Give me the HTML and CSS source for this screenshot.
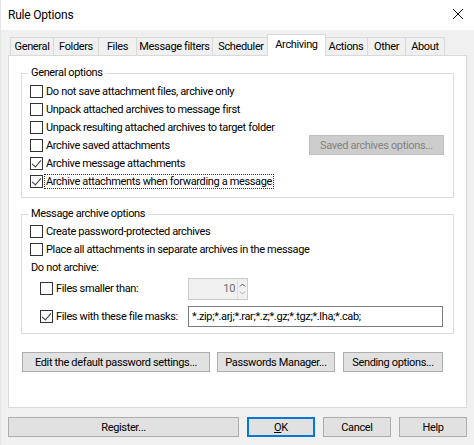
FILE: index.html
```html
<!DOCTYPE html>
<html lang="en">
<head>
  <meta charset="UTF-8">
  <title>Rule Options</title>
  <link rel="stylesheet" href="styles.css">
</head>
<body>
  <div class="window">
    <div class="titlebar">
      <span class="title">Rule Options</span>
      <svg class="close" width="12" height="12" viewBox="0 0 12 12">
        <path d="M1 1 L11 11 M11 1 L1 11" stroke="#111" stroke-width="1" fill="none"/>
      </svg>
    </div>

    <div class="content">
      <div class="tabs">
        <div class="tab tab-general">General</div>
        <div class="tab tab-folders">Folders</div>
        <div class="tab tab-files">Files</div>
        <div class="tab tab-filters">Message filters</div>
        <div class="tab tab-scheduler">Scheduler</div>
        <div class="tab tab-archiving active">Archiving</div>
        <div class="tab tab-actions">Actions</div>
        <div class="tab tab-other">Other</div>
        <div class="tab tab-about">About</div>
      </div>

      <div class="panel">
        <fieldset class="group group-general">
          <legend>General options</legend>
          <div class="row"><span class="check"></span>Do not save attachment files, archive only</div>
          <div class="row"><span class="check"></span>Unpack attached archives to message first</div>
          <div class="row"><span class="check"></span>Unpack resulting attached archives to target folder</div>
          <div class="row row-split">
            <span class="row-label"><span class="check"></span>Archive saved attachments</span>
            <span class="btn disabled saved-btn">Saved archives options...</span>
          </div>
          <div class="row"><span class="check checked"></span>Archive message attachments</div>
          <div class="row"><span class="check checked"></span><span class="focus">Archive attachments when forwarding a message</span></div>
        </fieldset>

        <fieldset class="group group-message">
          <legend>Message archive options</legend>
          <div class="row first"><span class="check"></span>Create password-protected archives</div>
          <div class="row"><span class="check"></span>Place all attachments in separate archives in the message</div>
          <div class="row plain">Do not archive:</div>
          <div class="row indent field-row">
            <span class="field-label"><span class="check"></span>Files smaller than:</span>
            <span class="spin">
              <span class="spin-value">10</span>
              <span class="spin-arrows">
                <svg width="7" height="4" viewBox="0 0 7 4"><path d="M1 3.5 L3.5 1 L6 3.5" stroke="#555" fill="none"/></svg>
                <svg width="7" height="4" viewBox="0 0 7 4"><path d="M1 0.5 L3.5 3 L6 0.5" stroke="#aaa" fill="none"/></svg>
              </span>
            </span>
          </div>
          <div class="row indent field-row masks-row">
            <span class="field-label"><span class="check checked"></span>Files with these file masks:</span>
            <span class="textbox">*.zip;*.arj;*.rar;*.z;*.gz;*.tgz;*.lha;*.cab;</span>
          </div>
        </fieldset>

        <div class="panel-buttons">
          <span class="btn btn-edit">Edit the default password settings...</span>
          <span class="btn btn-pm">Passwords Manager...</span>
          <span class="btn btn-send">Sending options...</span>
        </div>
      </div>

      <div class="footer">
        <span class="btn btn-register">Register...</span>
        <span class="btn btn-ok"><u>O</u>K</span>
        <span class="btn btn-small">Cancel</span>
        <span class="btn btn-small">Help</span>
      </div>
    </div>
  </div>
</body>
</html>
```

FILE: styles.css
```css
:root {
  --face: #f0f0f0;
  --border: #d9d9d9;
  --group-border: #dcdcdc;
  --text: #000000;
  --btn-face: #e1e1e1;
  --btn-border: #adadad;
}

body {
  margin: 0;
  font-family: Roboto, "Noto Sans", sans-serif;
  font-size: 11px;
  letter-spacing: -0.35px;
  color: var(--text);
  background: var(--face);
}

.window {
  width: 474px;
  height: 445px;
  background: var(--face);
  box-sizing: border-box;
  border-left: 1px solid #e4e4e4;
  overflow: hidden;
}

.titlebar {
  height: 30px;
  background: #ffffff;
  display: flex;
  align-items: center;
  justify-content: space-between;
  padding: 0 10px 0 7px;
}

.title {
  font-size: 12px;
  letter-spacing: -0.2px;
}

.close {
  margin-top: -3px;
}

.content {
  padding: 5px 7px 0 7px;
}

/* tabs */
.tabs {
  display: flex;
  height: 20px;
  padding-left: 2px;
  align-items: flex-end;
  position: relative;
  z-index: 1;
  white-space: nowrap;
}

.tab {
  flex: none;
  height: 18px;
  line-height: 17px;
  border: 1px solid var(--border);
  border-bottom: none;
  margin-right: -1px;
  background: var(--face);
  box-sizing: border-box;
  text-align: center;
}

.tab-general { width: 44px; }
.tab-folders { width: 46px; }
.tab-files { width: 39px; }
.tab-filters { width: 77px; }
.tab-scheduler { width: 58px; }
.tab-archiving { width: 59px; }
.tab-actions { width: 44px; }
.tab-other { width: 39px; }
.tab-about { width: 40px; }

.tab.active {
  height: 22px;
  line-height: 19px;
  background: #ffffff;
  margin: 0 -2px 0 -2px;
  position: relative;
  z-index: 1;
  top: 1px;
}

/* panel */
.panel {
  background: #ffffff;
  border: 1px solid var(--border);
  height: 353px;
  box-sizing: border-box;
  padding: 10px 12px 0 12px;
}

.group {
  margin: 0;
  border: 1px solid var(--group-border);
  padding: 0 0 6px 8px;
}

.group legend {
  padding: 0 3px;
  margin-left: -2px;
  line-height: 14px;
}

.group-general .row:first-of-type {
  margin-top: 2px;
}

.group-general .row:last-child {
  height: 19px;
}

.group-message {
  margin-top: 9px;
  padding-bottom: 6px;
}

.row {
  display: flex;
  align-items: center;
  height: 18px;
  white-space: nowrap;
}

.row.first {
  margin-top: 1px;
}

.row.plain {
  padding-left: 1px;
  height: 19px;
}

.row-split {
  justify-content: space-between;
  padding-right: 9px;
}

.row-label {
  display: flex;
  align-items: center;
}

.check {
  width: 13px;
  height: 13px;
  border: 1px solid #333333;
  box-sizing: border-box;
  background: #ffffff;
  margin-right: 3px;
  flex: none;
  position: relative;
}

.check.checked::after {
  content: "";
  position: absolute;
  left: 3px;
  top: 0px;
  width: 4px;
  height: 8px;
  border: solid #333333;
  border-width: 0 1px 1px 0;
  transform: rotate(40deg);
}

.focus {
  outline: 1px dotted #333333;
  outline-offset: 0;
  padding: 0 1px;
  margin-left: -1px;
}

/* buttons */
.btn {
  display: inline-flex;
  align-items: center;
  justify-content: center;
  height: 20px;
  box-sizing: border-box;
  background: var(--btn-face);
  border: 1px solid var(--btn-border);
  white-space: nowrap;
}

.btn.disabled {
  background: #cccccc;
  border-color: #bfbfbf;
  color: #838383;
}

.saved-btn {
  width: 135px;
}

/* message archive fields */
.indent {
  padding-left: 10px;
}

.field-row {
  height: 23px;
}

.field-label {
  display: flex;
  align-items: center;
  width: 148px;
}

.spin {
  display: flex;
  align-items: center;
  width: 60px;
  height: 22px;
  background: #f0f0f0;
  border: 1px solid #cccccc;
  box-sizing: border-box;
}

.spin-value {
  flex: 1;
  text-align: right;
  padding-right: 2px;
  color: #6d6d6d;
}

.spin-arrows {
  display: flex;
  flex-direction: column;
  justify-content: center;
  gap: 4px;
  width: 10px;
  height: 100%;
  border-left: 1px solid #dddddd;
  padding-left: 1px;
  box-sizing: border-box;
}

.masks-row {
  height: 21px;
  margin-top: 6px;
}

.textbox {
  display: flex;
  align-items: center;
  width: 255px;
  height: 21px;
  border: 1px solid #7a7a7a;
  box-sizing: border-box;
  padding-left: 3px;
  background: #ffffff;
}

.panel-buttons {
  display: flex;
  margin-top: 18px;
  padding-left: 1px;
  gap: 7px;
}

.btn-edit { width: 188px; }
.btn-pm { width: 118px; }
.btn-send { width: 100px; margin-left: 1px; }

/* footer */
.footer {
  display: flex;
  margin-top: 9px;
  gap: 8px;
}

.btn-register { width: 231px; }

.btn-ok {
  width: 68px;
  border: 1px solid #0078d7;
  box-shadow: inset 0 0 0 1px #0078d7;
}

.btn-small { width: 68px; }
```
